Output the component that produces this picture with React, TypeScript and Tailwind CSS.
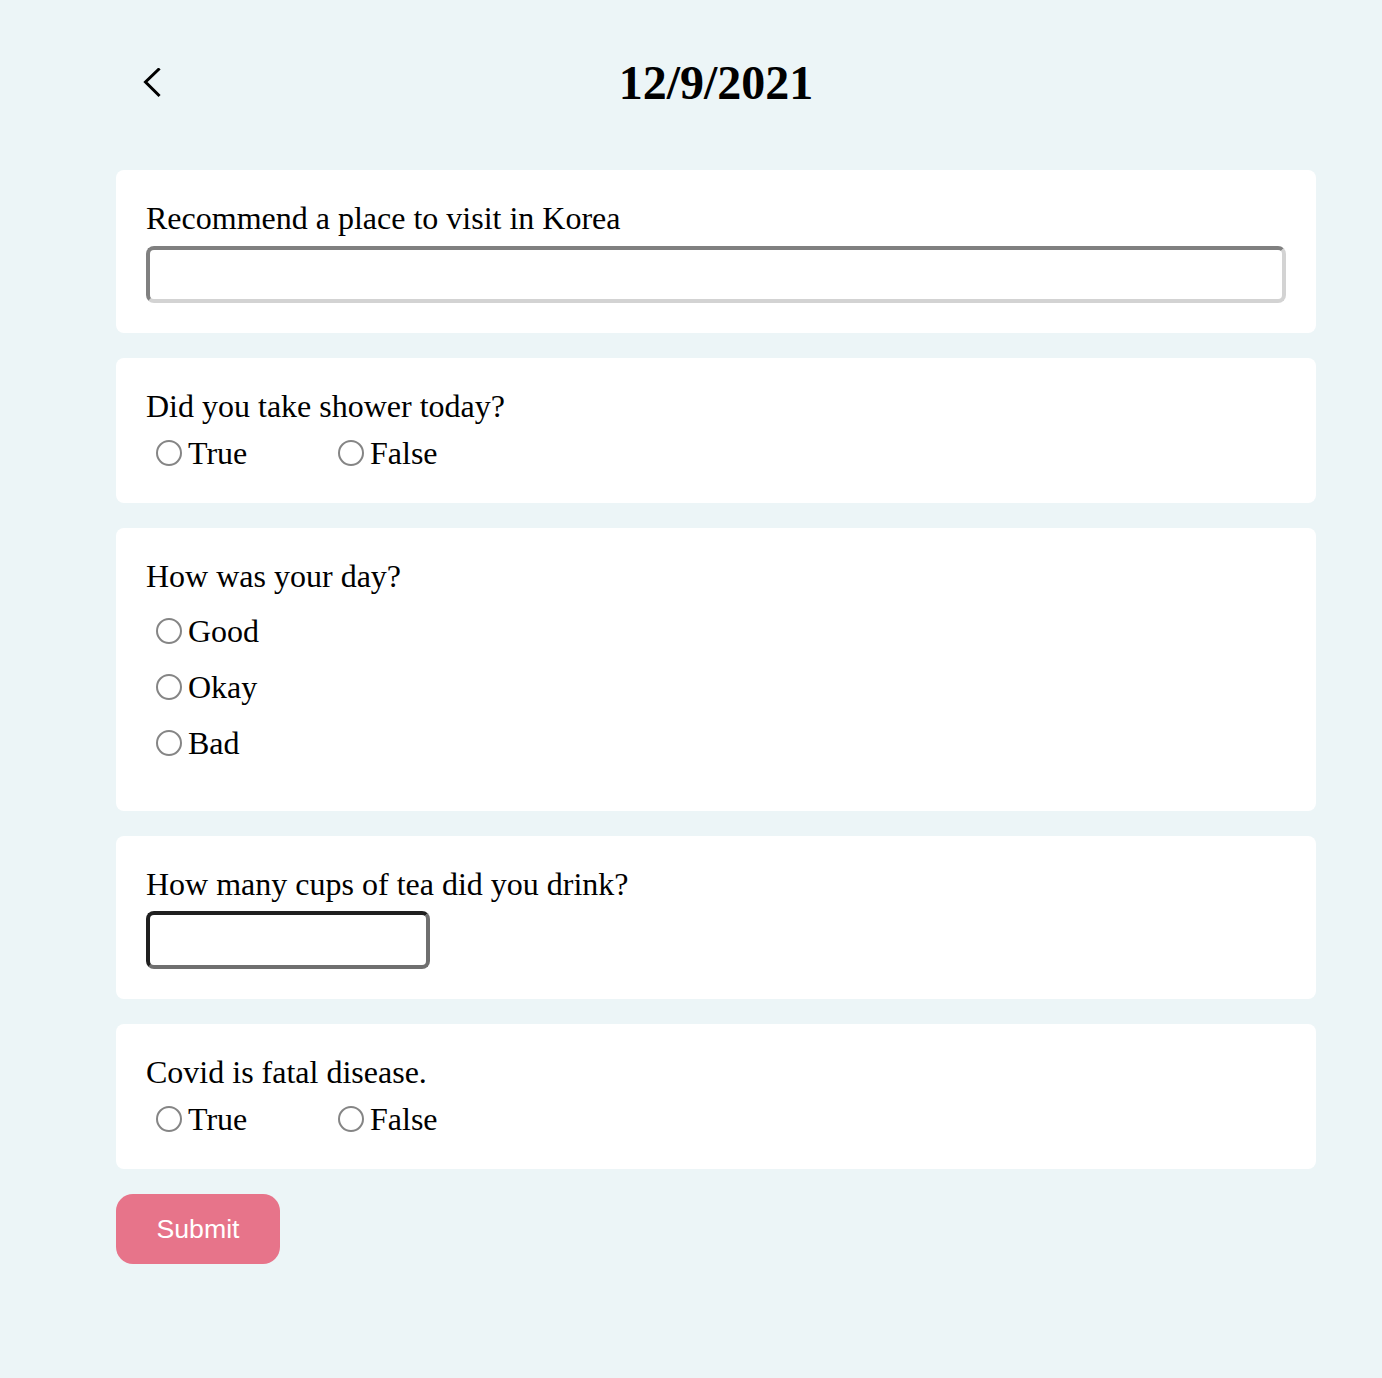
import React from "react";

const serif = "font-['Liberation_Serif','Times_New_Roman',serif]";

function Radio({ name, label, className = "" }: { name: string; label: string; className?: string }) {
  return (
    <label className={`flex items-center h-[40px] ${className}`}>
      <input
        type="radio"
        name={name}
        className="appearance-none w-[26px] h-[26px] ml-[10px] mr-[6px] rounded-full border-[2px] border-[#858585] bg-white shrink-0"
      />
      <span className="text-[32px] leading-[37px] text-black">{label}</span>
    </label>
  );
}

function Card({ children }: { children: React.ReactNode }) {
  return <div className="bg-white rounded-[8px] px-[30px] py-[30px]">{children}</div>;
}

function Label({ children }: { children: React.ReactNode }) {
  return <div className="text-[32px] leading-[37px] text-black">{children}</div>;
}

export default function App() {
  return (
    <div className={`min-h-screen bg-[#ecf5f7] ${serif}`}>
      <div className="w-[1200px] ml-[116px] pt-[55px] pb-[100px]">
        <div className="grid grid-cols-[1fr_auto_1fr] items-center h-[55px]">
          <div className="pl-[26px] flex items-center">
            <svg width="20" height="30" viewBox="0 0 20 30" fill="none">
              <path d="M16.5 1.5 L3.5 14 L16.5 27" stroke="#000" strokeWidth="3" strokeLinecap="square" strokeLinejoin="miter" />
            </svg>
          </div>
          <h2 className="text-[48px] leading-[55px] font-bold text-black">12/9/2021</h2>
          <div />
        </div>

        <div className="mt-[60px] flex flex-col gap-[25px]">
          <Card>
            <Label>Recommend a place to visit in Korea</Label>
            <input
              type="text"
              className="mt-[9px] block w-full h-[57px] rounded-[8px] border-[4px] border-t-[#808080] border-l-[#808080] border-b-[#d3d3d3] border-r-[#d3d3d3] bg-white outline-none"
            />
          </Card>

          <Card>
            <Label>Did you take shower today?</Label>
            <div className="mt-[8px] flex">
              <Radio name="shower" label="True" className="w-[182px]" />
              <Radio name="shower" label="False" />
            </div>
          </Card>

          <div className="bg-white rounded-[8px] px-[30px] pt-[30px] pb-[32px]">
            <Label>How was your day?</Label>
            <div className="flex flex-col gap-[16px] py-[16px]">
              <Radio name="day" label="Good" />
              <Radio name="day" label="Okay" />
              <Radio name="day" label="Bad" />
            </div>
          </div>

          <Card>
            <Label>How many cups of tea did you drink?</Label>
            <input
              type="number"
              className="mt-[8px] block w-[284px] h-[58px] rounded-[8px] border-[4px] border-t-[#1f1f1f] border-l-[#1f1f1f] border-b-[#6f6f6f] border-r-[#6f6f6f] bg-white outline-none"
            />
          </Card>

          <Card>
            <Label>Covid is fatal disease.</Label>
            <div className="mt-[8px] flex">
              <Radio name="covid" label="True" className="w-[182px]" />
              <Radio name="covid" label="False" />
            </div>
          </Card>

          <div>
            <button className="w-[164px] h-[70px] rounded-[17px] bg-[#e7748a] text-white text-[26.67px] font-['Liberation_Sans',Arial,sans-serif]">
              Submit
            </button>
          </div>
        </div>
      </div>
    </div>
  );
}
